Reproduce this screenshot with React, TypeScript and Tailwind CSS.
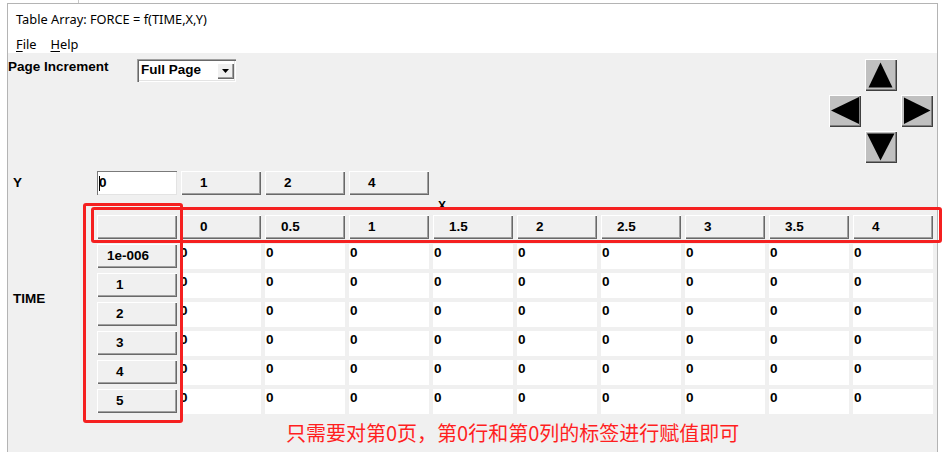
import React from 'react';

const HEADERS = ['0', '0.5', '1', '1.5', '2', '2.5', '3', '3.5', '4'];
const ROWS = ['1e-006', '1', '2', '3', '4', '5'];
const Y_PAGES = ['1', '2', '4'];

const RAISED =
  'shadow-[inset_1px_1px_0_#ffffff,inset_-1px_-1px_0_#696969,inset_-2px_-2px_0_#a0a0a0]';

function labelPad(label: string) {
  if (label.length === 1) return 'pl-[19px]';
  if (label.length === 3) return 'pl-[16px]';
  return 'pl-[10px]';
}

function GrayButton({ label }: { label: string }) {
  return (
    <div
      className={`w-[80px] h-[24px] shrink-0 bg-[#f0f0f0] ${RAISED} flex items-center ${labelPad(label)} text-[13.5px] font-bold text-black`}
    >
      {label}
    </div>
  );
}

function ArrowButton({ points }: { points: string }) {
  return (
    <div className="w-[32px] h-[32px] bg-[#c0c0c0] shadow-[inset_1px_1px_0_#ffffff,inset_-1px_-1px_0_#404040,inset_-2px_-2px_0_#808080]">
      <svg width="32" height="32" viewBox="0 0 32 32">
        <polygon points={points} fill="#000" />
      </svg>
    </div>
  );
}

export default function App() {
  return (
    <div
      className="relative w-[944px] h-[452px] overflow-hidden bg-white"
      style={{ fontFamily: "'Liberation Sans', Arial, sans-serif" }}
    >
      {/* strip above the window */}
      <div className="h-[3px] relative">
        <div className="absolute left-[78px] top-0 w-px h-[3px] bg-[#c8c8c8]" />
      </div>

      {/* window */}
      <div className="ml-[7px] w-[931px] h-[449px] border-l border-r border-t border-[#b4b4b4] flex flex-col">
        {/* title */}
        <div
          className="h-[32px] bg-white flex items-center pl-[8px] text-[12.8px] text-black"
          style={{ fontFamily: "'Noto Sans', 'Open Sans', sans-serif" }}
        >
          Table Array: FORCE = f(TIME,X,Y)
        </div>
        {/* menu */}
        <div
          className="h-[17px] bg-white flex items-center pl-[8px] gap-[14px] text-[12.8px] leading-[15px] text-black"
          style={{ fontFamily: "'Noto Sans', 'Open Sans', sans-serif" }}
        >
          <span>
            <span className="underline underline-offset-2">F</span>ile
          </span>
          <span>
            <span className="underline underline-offset-2">H</span>elp
          </span>
        </div>

        {/* body */}
        <div className="flex-1 bg-[#f0f0f0] pt-[6px]">
          {/* page increment + arrows */}
          <div className="flex justify-between items-start pr-[4px]">
            <div className="flex items-start">
              <div className="w-[129px] text-[13.5px] font-bold text-black leading-[16px]">
                Page Increment
              </div>
              <div className="w-[99px] h-[23px] bg-white shadow-[inset_1px_1px_0_#a0a0a0,inset_2px_2px_0_#696969,inset_-1px_-1px_0_#ffffff,inset_-2px_-2px_0_#e3e3e3] flex items-center justify-between pl-[4px] pr-[2px]">
                <span className="text-[13.5px] font-bold text-black">Full Page</span>
                <div className={`w-[17px] h-[16px] bg-[#f0f0f0] ${RAISED} flex items-center justify-center`}>
                  <svg width="7" height="4" viewBox="0 0 7 4">
                    <polygon points="0,0 7,0 3.5,4" fill="#000" />
                  </svg>
                </div>
              </div>
            </div>
            <div className="grid grid-cols-[32px_32px_32px] gap-1">
              <div />
              <ArrowButton points="15.5,3.5 27.5,28.5 3.5,28.5" />
              <div />
              <ArrowButton points="2,15.5 30,2 30,29" />
              <div />
              <ArrowButton points="3,2.5 29.5,15.5 3,29" />
              <div />
              <ArrowButton points="2,2.5 29.5,2.5 15.5,29.5" />
              <div />
            </div>
          </div>

          {/* Y row */}
          <div className="mt-[8px] flex items-center">
            <div className="w-[89px] pl-[5px] text-[13.5px] font-bold text-black">Y</div>
            <div className="w-[80px] h-[24px] bg-white shadow-[inset_1px_1px_0_#7a7a7a,inset_-1px_-1px_0_#e3e3e3] flex items-center pl-[2px]">
              <span className="w-px h-[15px] bg-black" />
              <span className="text-[13.5px] font-bold text-black -ml-px">0</span>
            </div>
            <div className="ml-1 flex gap-1">
              {Y_PAGES.map((p) => (
                <GrayButton key={p} label={p} />
              ))}
            </div>
          </div>

          {/* X label */}
          <div className="h-[20px] pl-[430px] pt-[5px] text-[12px] font-bold leading-[12px] text-black">X</div>

          {/* table */}
          <div className="flex">
            <div className="w-[89px] shrink-0">
              <div className="pl-[5px] mt-[74px] text-[13.5px] font-bold text-black">TIME</div>
            </div>
            <div className="flex flex-col">
              <div className="flex gap-1">
                <GrayButton label="" />
                {HEADERS.map((h) => (
                  <GrayButton key={h} label={h} />
                ))}
              </div>
              <div className="mt-[5px] flex flex-col gap-1">
                {ROWS.map((r) => (
                  <div key={r} className="flex gap-1 items-start">
                    <GrayButton label={r} />
                    {HEADERS.map((h, i) => (
                      <div
                        key={h}
                        className="w-[80px] h-[25px] bg-white overflow-hidden pt-[1px] text-[13.5px] font-bold leading-[16px] text-black"
                      >
                        <span className={i === 0 ? 'block -ml-[1px]' : 'block pl-[1px]'}>0</span>
                      </div>
                    ))}
                  </div>
                ))}
              </div>
            </div>
          </div>

          {/* annotation text */}
          <div
            className="mt-[6px] pl-[278px] text-[20px] leading-[25px] text-[#ff1f1f]"
            style={{ fontFamily: "'Noto Sans CJK SC', 'Noto Sans', sans-serif" }}
          >
            只需要对第0页，第0行和第0列的标签进行赋值即可
          </div>
        </div>
      </div>

      {/* red annotation boxes */}
      <div className="absolute left-[83px] top-[203px] w-[100px] h-[220px] border-[3px] border-[#f52020] rounded-[3px]" />
      <div className="absolute left-[91px] top-[207px] w-[851px] h-[36px] border-[3px] border-[#f52020] rounded-[3px]" />
    </div>
  );
}
